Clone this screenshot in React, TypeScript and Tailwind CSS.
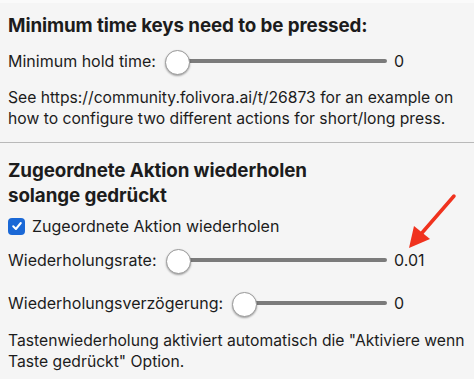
import React from 'react'

// Slider row: label, track with a round thumb, value on the right
function SliderRow({ label, value, pct }: { label: string; value: string; pct: number }) {
  return (
    <div className="flex items-center h-[24px]">
      <div className="flex items-center w-[379px]">
        <span className="whitespace-nowrap">{label}</span>
        <div className="relative flex-1 h-[26px] ml-[9px] flex items-center">
          <div className="absolute left-[10px] right-0 h-[4px] rounded-full bg-[#7b7b7b]" />
          <div
            className="absolute top-[2px] w-[25px] h-[25px] rounded-full bg-white border border-[#9a9a9a] shadow-[0_1px_2px_rgba(0,0,0,0.35)]"
            style={{ left: `${pct}%` }}
          />
        </div>
      </div>
      <span className="pl-[7px]">{value}</span>
    </div>
  )
}

export default function App() {
  return (
    <div
      className="relative w-[474px] h-[379px] overflow-hidden bg-[#f5f5f5] text-[#1c1c1c] text-[16px]"
      style={{ fontFamily: 'Inter, "Liberation Sans", Arial, sans-serif' }}
    >
      <div className="h-[3px] bg-[#fafafa]" />

      {/* Section 1 */}
      <div className="px-[8px]">
        <h2 className="font-bold text-[18.8px] leading-[24px] mt-[11px] tracking-[-0.1px]">
          Minimum time keys need to be pressed:
        </h2>
        <div className="mt-[11px]">
          <SliderRow label="Minimum hold time:" value="0" pct={0} />
        </div>
        <p className="mt-[14px] leading-[21px] text-[15.7px]">
          See https://community.folivora.ai/t/26873 for an example on how to configure two different actions for short/long press.
        </p>
      </div>

      <div className="mt-[13px] h-[1px] bg-[#b9b9b9]" />

      {/* Section 2 */}
      <div className="px-[8px]">
        <h2 className="font-bold text-[18.8px] leading-[25px] mt-[15px] tracking-[-0.1px]">
          Zugeordnete Aktion wiederholen<br />solange gedrückt
        </h2>
        <label className="flex items-center mt-[6px] h-[24px]">
          <span className="w-[17px] h-[17px] rounded-[4px] bg-[#1a68d6] flex items-center justify-center">
            <svg width="12" height="12" viewBox="0 0 12 12" fill="none">
              <path d="M2.2 6.3 L4.9 9 L9.8 3" stroke="white" strokeWidth="2" strokeLinecap="round" strokeLinejoin="round" />
            </svg>
          </span>
          <span className="ml-[7px]">Zugeordnete Aktion wiederholen</span>
        </label>
        <div className="mt-[10px]">
          <SliderRow label="Wiederholungsrate:" value="0.01" pct={0} />
        </div>
        <div className="mt-[19px]">
          <SliderRow label="Wiederholungsverzögerung:" value="0" pct={0} />
        </div>
        <p className="mt-[15px] leading-[21px] text-[15.7px]">
          Tastenwiederholung aktiviert automatisch die "Aktiviere wenn Taste gedrückt" Option.
        </p>
      </div>

      {/* red annotation arrow */}
      <svg className="absolute left-0 top-0 pointer-events-none" width="474" height="379">
        <line x1="454" y1="196" x2="421" y2="234" stroke="#f0321e" strokeWidth="3.5" strokeLinecap="round" />
        <polygon points="409,248 414,226 430,239" fill="#f0321e" />
      </svg>
    </div>
  )
}
